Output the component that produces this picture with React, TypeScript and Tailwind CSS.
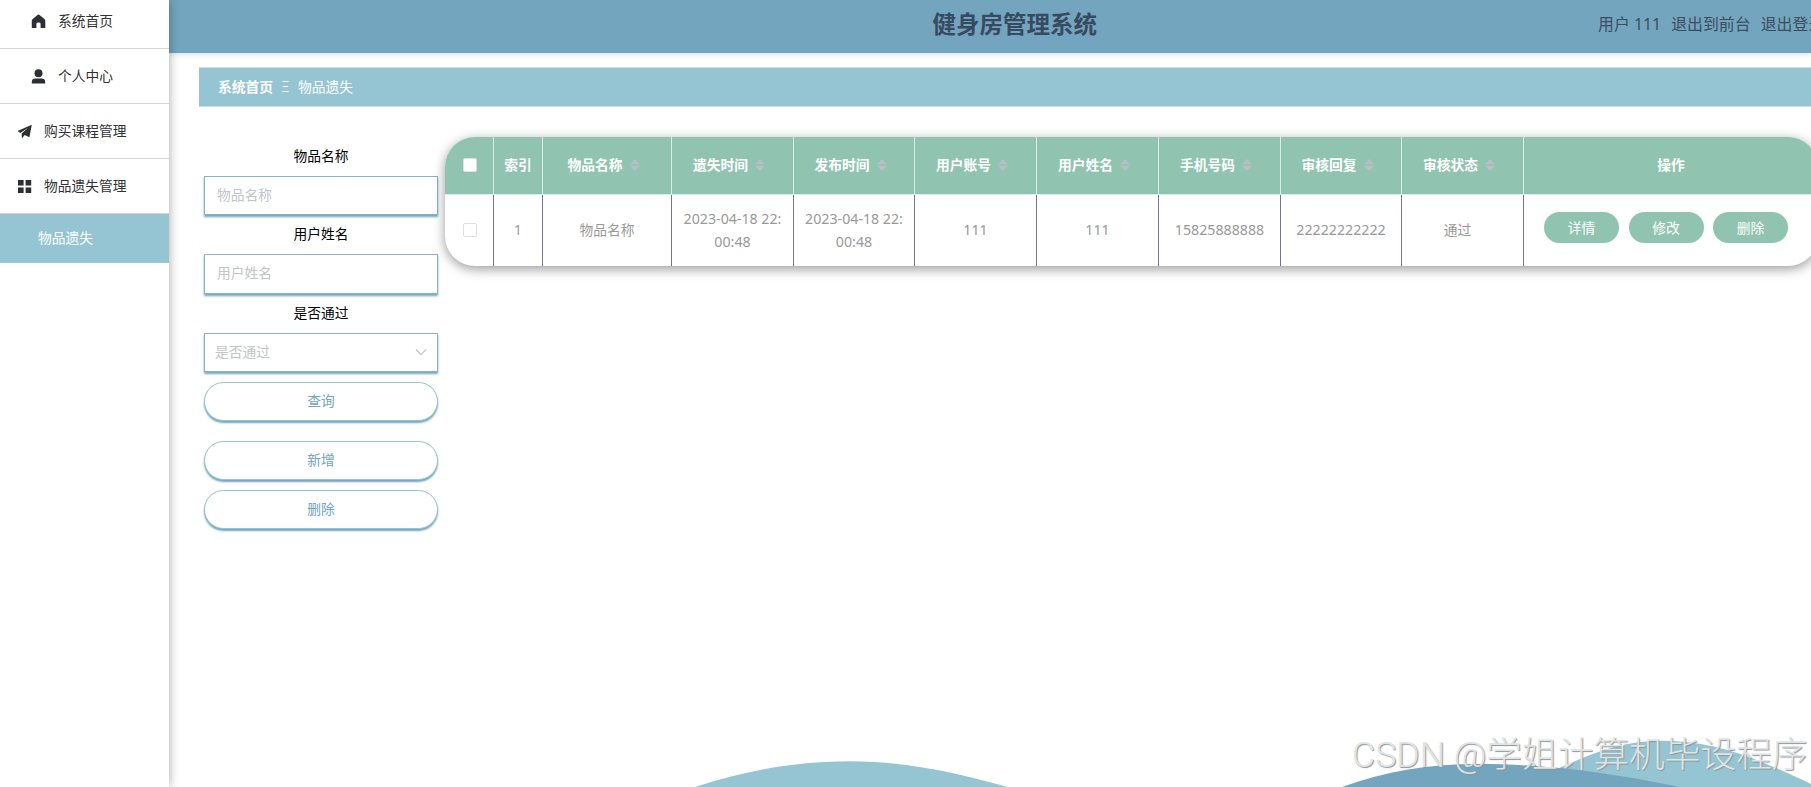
import { useState } from "react";

const menu = [
  { label: "系统首页", icon: "home", className: "pl-[31px]" },
  { label: "个人中心", icon: "user", className: "pl-[31px]" },
  { label: "购买课程管理", icon: "plane", className: "pl-[17px]" },
  { label: "物品遗失管理", icon: "grid", className: "pl-[17px]" },
];

const columns = [
  { label: "物品名称", width: 129 },
  { label: "遗失时间", width: 122 },
  { label: "发布时间", width: 121 },
  { label: "用户账号", width: 122 },
  { label: "用户姓名", width: 122 },
  { label: "手机号码", width: 122 },
  { label: "审核回复", width: 121 },
  { label: "审核状态", width: 122 },
];

const rows = [
  ["物品名称", "2023-04-18 22:00:48", "2023-04-18 22:00:48", "111", "111", "15825888888", "22222222222", "通过"],
];

function MenuIcon({ name }: { name: string }) {
  return (
    <svg className="w-[15px] h-[15px] shrink-0" viewBox="0 0 15 15" fill="#2b2f33">
      {name === "home" && <path d="M7.5 0.6 Q8.1 0.6 8.6 1.1 L13.6 5.3 Q14.3 5.9 14.3 6.8 V13.9 H9.6 V9.8 Q9.6 8.6 7.5 8.6 Q5.4 8.6 5.4 9.8 V13.9 H0.8 V6.8 Q0.8 5.9 1.5 5.3 L6.4 1.1 Q6.9 0.6 7.5 0.6Z" />}
      {name === "user" && (
        <>
          <circle cx="7.5" cy="4.3" r="4" />
          <path d="M0.8 14.5 V13 Q0.8 9.6 4.3 9.6 H10.7 Q14.2 9.6 14.2 13 V14.5Z" />
        </>
      )}
      {name === "plane" && <path d="M14.8 0.8 L12.4 13.2 L7.6 11.1 L5 14.4 L4.6 9.6 L11.5 3.6 L3.3 8.9 L0.6 6.9Z" />}
      {name === "grid" && <path d="M1 1h5.6v5.4H1z M8.6 1h5.6v5.4H8.6z M1 8.6h5.6V14H1z M8.6 8.6h5.6V14H8.6z" />}
    </svg>
  );
}

function SortIcon() {
  return (
    <svg className="inline-block w-2.5 h-3 ml-[7px] mr-[7px] align-[-1px]" viewBox="0 0 10 12" fill="#b9bfc8">
      <path d="M5 0 L9.8 5.3H0.2Z M0.2 6.7H9.8L5 12Z" />
    </svg>
  );
}

function FormInput({ label }: { label: string }) {
  return (
    <div className="w-[234px]">
      <label className="block h-[39px] leading-[37px] text-center text-black">{label}</label>
      <input
        type="text"
        placeholder={label}
        className="block w-[234px] h-[39.5px] px-3 pb-0.5 bg-white border border-[#8ab4c6] outline-none shadow-[0_2px_2px_#73a5be] placeholder:text-[#c0c4cc]"
      />
    </div>
  );
}

function PillButton({ children, className = "" }: { children: string; className?: string }) {
  return (
    <button className={`block w-[234px] h-[39px] pb-px rounded-full bg-white border border-[#95c5d2] shadow-[0_2px_2px_#73a5be] text-[#73a5be] ${className}`}>
      {children}
    </button>
  );
}

export default function App() {
  const [checked, setChecked] = useState(false);

  return (
    <div className="relative flex w-screen h-screen overflow-hidden bg-white text-[13.75px] leading-5 font-['Noto_Sans','Noto_Sans_CJK_SC',sans-serif]">
      <svg className="absolute left-0 bottom-0 w-[1811px] h-[60px]" viewBox="0 727 1811 60">
        <path fill="#95c5d2" d="M695 787 C750 769 800 761.3 850 761.3 C902 761.3 950 771 1008 787Z" />
        <path fill="#95c5d2" d="M1520 787 C1570 763 1610 740.7 1661 740.7 C1712 740.7 1750 755 1811 784 V787Z" />
        <path fill="#73a5be" d="M1342 787 C1385 771 1430 764 1478 764 C1540 764 1600 771 1680 787Z" />
      </svg>

      <aside className="relative z-10 w-[169px] shrink-0 bg-white shadow-[0_0_10px_rgba(0,0,0,0.35)] text-[#303133]">
        <ul className="-mt-1.5">
          {menu.map((item) => (
            <li key={item.label} className={`flex items-center gap-3 h-[55px] border-b border-[#d6d6d6] ${item.className}`}>
              <MenuIcon name={item.icon} />
              <span>{item.label}</span>
            </li>
          ))}
        </ul>
        <div className="h-[49px] leading-[48px] pl-[38px] bg-[#95c5d2] text-white">物品遗失</div>
      </aside>

      <div className="flex-1 min-w-0">
        <header className="grid grid-cols-[763px_1fr] h-[53px] bg-[#73a5be] shadow-[0_1px_6px_rgba(115,165,190,0.35)]">
          <h1 className="pt-2 leading-8 text-[23.5px] font-bold text-[#374a61] text-right whitespace-nowrap w-[928px]">健身房管理系统</h1>
          <div className="flex gap-2.5 pt-3 pl-[666px] leading-6 text-[15.9px] text-[#3b4d62] whitespace-nowrap">
            <span>用户 111</span>
            <span>退出到前台</span>
            <span>退出登录</span>
          </div>
        </header>

        <main className="pl-[30px] pt-[14px]">
          <nav className="flex items-center h-[39.5px] pl-[19px] bg-[#95c5d2] border-y border-[#c9e0e6] text-white">
            <span className="font-bold">系统首页</span>
            <span className="w-[25px] text-center font-light">Ξ</span>
            <span>物品遗失</span>
          </nav>

          <div className="flex items-start pt-[30px] pl-[5px]">
            <form className="w-[241px] shrink-0" onSubmit={(e) => e.preventDefault()}>
              <FormInput label="物品名称" />
              <FormInput label="用户姓名" />
              <label className="block h-[39px] leading-[37px] w-[234px] text-center text-black">是否通过</label>
              <div className="flex items-center justify-between w-[234px] h-[39.5px] pl-[10px] pr-[10px] bg-white border border-[#8ab4c6] shadow-[0_2px_2px_#73a5be] text-[#c0c4cc]">
                <span>是否通过</span>
                <svg className="w-3 h-3" viewBox="0 0 12 12" fill="none" stroke="#c0c4cc" strokeWidth="1.2">
                  <path d="M1 3.5 L6 8.7 L11 3.5" />
                </svg>
              </div>
              <PillButton className="mt-[10px]">查询</PillButton>
              <PillButton className="mt-5">新增</PillButton>
              <PillButton className="mt-[10px]">删除</PillButton>
            </form>

            <div className="w-[1373px] shrink-0 rounded-[30px] overflow-hidden bg-white shadow-[0_3px_12px_rgba(0,0,0,0.4)]">
              <table className="w-[1373px] table-fixed border-separate border-spacing-0 text-center">
                <colgroup>
                  <col style={{ width: 49 }} />
                  <col style={{ width: 49 }} />
                  {columns.map((col) => (
                    <col key={col.label} style={{ width: col.width }} />
                  ))}
                  <col style={{ width: 294 }} />
                </colgroup>
                <thead>
                  <tr className="h-[58px] bg-[#90c4b1] text-white">
                    <th className="pl-px border-r border-b border-[#dcebe6]">
                      <span
                        className="block mx-auto w-3.5 h-3.5 rounded-xs bg-white border border-[#dcdfe6]"
                        onClick={() => setChecked(!checked)}
                      />
                    </th>
                    <th className="border-r border-b border-[#dcebe6]">索引</th>
                    {columns.map((col) => (
                      <th key={col.label} className="border-r border-b border-[#dcebe6] whitespace-nowrap">
                        {col.label}
                        <SortIcon />
                      </th>
                    ))}
                    <th className="border-b border-[#dcebe6]">操作</th>
                  </tr>
                </thead>
                <tbody>
                  {rows.map((row, idx) => (
                    <tr key={idx} className="h-[71px] text-[#999] leading-[23.5px]">
                      <td className="pl-px border-r border-[#77758c]">
                        <span className={`block mx-auto w-3.5 h-3.5 rounded-xs border border-[#dcdfe6] ${checked ? "bg-[#90c4b1]" : "bg-white"}`} />
                      </td>
                      <td className="border-r border-[#77758c]">{idx + 1}</td>
                      {row.map((cell, i) => (
                        <td
                          key={i}
                          className={`border-r border-[#77758c] break-all ${i === 7 ? "pr-2.5" : "px-2"} ${/^\d/.test(cell) ? "text-[14.2px]" : ""}`}
                        >
                          {cell}
                        </td>
                      ))}
                      <td className="align-top pt-[17px]">
                        <div className="flex gap-[9.5px] pl-5">
                          {["详情", "修改", "删除"].map((text) => (
                            <button key={text} className="w-[75px] h-[31.5px] rounded-full bg-[#90c4b1] text-white">{text}</button>
                          ))}
                        </div>
                      </td>
                    </tr>
                  ))}
                </tbody>
              </table>
            </div>
          </div>
        </main>
      </div>

      <div className="absolute z-20 left-[1352px] top-[731px] leading-[48px] text-[35.7px] font-light whitespace-nowrap text-[#e0e4e6] [text-shadow:1px_1px_1px_#8f9497] font-['Roboto','Noto_Sans_CJK_SC',sans-serif]">
        CSDN @学姐计算机毕设程序
      </div>
    </div>
  );
}
